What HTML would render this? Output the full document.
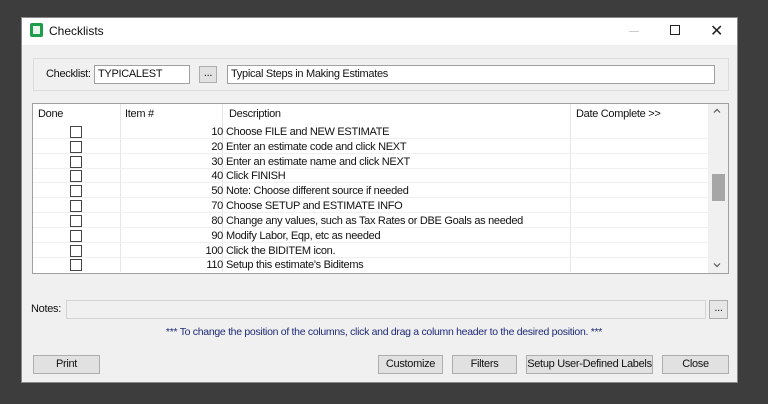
<!DOCTYPE html>
<html><head><meta charset="utf-8"><style>
*{box-sizing:border-box;margin:0;padding:0}
body{width:768px;height:404px;background:#3d3d3d;position:relative;overflow:hidden;font-family:"Liberation Sans",sans-serif;font-size:11px;color:#111;letter-spacing:-0.3px}
.a{position:absolute}
#win{position:absolute;left:21px;top:17px;width:717px;height:366px;background:#f0f0f0;border:1px solid #888}
.btn{position:absolute;background:#e1e1e1;border:1px solid #adadad;text-align:center;line-height:17px;height:19px}
.inp{position:absolute;background:#fff;border:1px solid #a0a0a0;height:19px;line-height:17px;padding-left:3px}
.cb{position:absolute;left:70px;width:12px;height:12px;border:1px solid #444;background:#fff}
.row{position:absolute;left:33px;width:675px;height:15px;border-bottom:1px solid #f0f0f0}
.num{position:absolute;width:40px;text-align:right;left:183px;line-height:14px}
.desc{position:absolute;left:226px;line-height:14px;white-space:nowrap}
.vl{position:absolute;top:104px;width:1px;height:168px;background:#e6e6e6}
</style></head><body>
<div id="win"></div>
<div class="a" style="left:22px;top:18px;width:715px;height:27px;background:#fff"></div>
<div class="a" style="left:30px;top:23px;width:13px;height:14px;background:#1e9e4a;border-radius:2px"></div>
<div class="a" style="left:33px;top:26px;width:7px;height:8px;background:#e8f5ea"></div>
<div class="a" style="left:49px;top:24px;font-size:12px;letter-spacing:0">Checklists</div>
<div class="a" style="left:629px;top:31px;width:10px;height:1px;background:#ccc"></div>
<div class="a" style="left:670px;top:25px;width:10px;height:10px;border:1px solid #222"></div>
<div class="a" style="left:710px;top:21px;font-size:16px;color:#222">✕</div>

<div class="a" style="left:33px;top:58px;width:696px;height:33px;border:1px solid #dcdcdc"></div>
<div class="a" style="left:46px;top:68px">Checklist:</div>
<div class="inp" style="left:94px;top:65px;width:96px">TYPICALEST</div>
<div class="btn" style="left:199px;top:66px;width:18px;height:17px;line-height:13px">...</div>
<div class="inp" style="left:227px;top:65px;width:488px">Typical Steps in Making Estimates</div>

<div class="a" style="left:32px;top:103px;width:697px;height:171px;background:#fff;border:1px solid #a0a0a0"></div>
<div class="vl" style="left:120px"></div><div class="vl" style="left:222px"></div><div class="vl" style="left:570px"></div>
<div class="a" style="left:38px;top:108px">Done</div>
<div class="a" style="left:125px;top:108px">Item #</div>
<div class="a" style="left:229px;top:108px">Description</div>
<div class="a" style="left:576px;top:108px">Date Complete &gt;&gt;</div>
<div class="a" style="left:708px;top:104px;width:20px;height:169px;background:#f0f0f0"></div>
<svg class="a" style="left:712px;top:107px" width="10" height="8"><path d="M2 5.5L5 2.5L8 5.5" stroke="#555" fill="none" stroke-width="1.2"/></svg>
<svg class="a" style="left:712px;top:261px" width="10" height="8"><path d="M2 2.5L5 5.5L8 2.5" stroke="#555" fill="none" stroke-width="1.2"/></svg>
<div class="a" style="left:712px;top:174px;width:13px;height:27px;background:#a6a6a6"></div>

<div class="row" style="top:124px"><div class="cb" style="left:37px;top:2px"></div></div>
<div class="row" style="top:139px"><div class="cb" style="left:37px;top:2px"></div></div>
<div class="row" style="top:154px"><div class="cb" style="left:37px;top:2px"></div></div>
<div class="row" style="top:168px"><div class="cb" style="left:37px;top:2px"></div></div>
<div class="row" style="top:183px"><div class="cb" style="left:37px;top:2px"></div></div>
<div class="row" style="top:198px"><div class="cb" style="left:37px;top:2px"></div></div>
<div class="row" style="top:213px"><div class="cb" style="left:37px;top:2px"></div></div>
<div class="row" style="top:228px"><div class="cb" style="left:37px;top:2px"></div></div>
<div class="row" style="top:243px"><div class="cb" style="left:37px;top:2px"></div></div>
<div class="row" style="top:257px;border:none"><div class="cb" style="left:37px;top:2px"></div></div>

<div class="num" style="top:125px">10</div><div class="desc" style="top:125px">Choose FILE and NEW ESTIMATE</div>
<div class="num" style="top:140px">20</div><div class="desc" style="top:140px">Enter an estimate code and click NEXT</div>
<div class="num" style="top:155px">30</div><div class="desc" style="top:155px">Enter an estimate name and click NEXT</div>
<div class="num" style="top:169px">40</div><div class="desc" style="top:169px">Click FINISH</div>
<div class="num" style="top:184px">50</div><div class="desc" style="top:184px">Note: Choose different source if needed</div>
<div class="num" style="top:199px">70</div><div class="desc" style="top:199px">Choose SETUP and ESTIMATE INFO</div>
<div class="num" style="top:214px">80</div><div class="desc" style="top:214px">Change any values, such as Tax Rates or DBE Goals as needed</div>
<div class="num" style="top:229px">90</div><div class="desc" style="top:229px">Modify Labor, Eqp, etc as needed</div>
<div class="num" style="top:244px">100</div><div class="desc" style="top:244px">Click the BIDITEM icon.</div>
<div class="num" style="top:258px">110</div><div class="desc" style="top:258px">Setup this estimate's Biditems</div>

<div class="a" style="left:31px;top:303px">Notes:</div>
<div class="a" style="left:66px;top:300px;width:640px;height:19px;background:#f0f0f0;border:1px solid #d4d4d4"></div>
<div class="btn" style="left:709px;top:300px;width:19px;height:19px;line-height:15px;background:#e6e6e6">...</div>
<div class="a" style="left:0;width:768px;top:326px;text-align:center;color:#1e2a78;font-size:10.5px">*** To change the position of the columns, click and drag a column header to the desired position. ***</div>

<div class="btn" style="left:33px;top:355px;width:67px">Print</div>
<div class="btn" style="left:378px;top:355px;width:65px">Customize</div>
<div class="btn" style="left:452px;top:355px;width:65px">Filters</div>
<div class="btn" style="left:526px;top:355px;width:127px">Setup User-Defined Labels</div>
<div class="btn" style="left:662px;top:355px;width:67px">Close</div>
</body></html>
